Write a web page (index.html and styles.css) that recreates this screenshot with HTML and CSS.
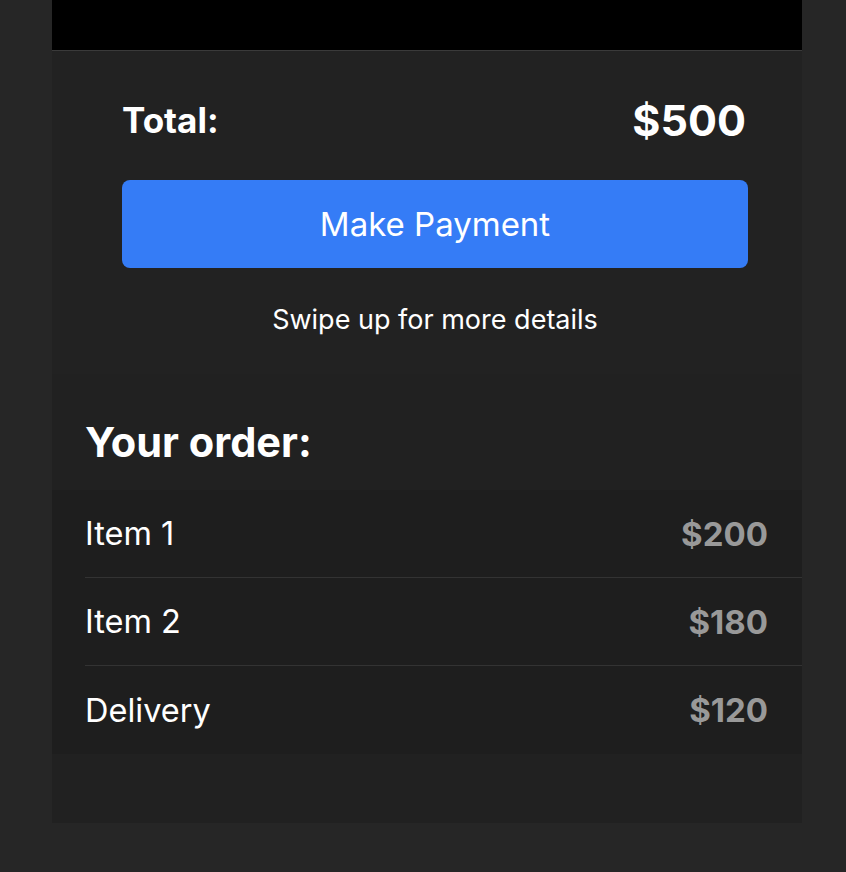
FILE: index.html
```
<!DOCTYPE html>
<html lang="en">
<head>
  <meta charset="UTF-8">
  <meta name="viewport" content="width=device-width, initial-scale=1.0">
  <title>Checkout</title>
  <link rel="stylesheet" href="styles.css">
</head>
<body>
  <div class="sheet">
    <div class="top-bar"></div>

    <section class="summary">
      <div class="total-row">
        <span class="total-label">Total:</span>
        <span class="total-amount">$500</span>
      </div>
      <button class="pay-button">Make Payment</button>
      <p class="swipe-hint">Swipe up for more details</p>
    </section>

    <section class="order">
      <h2 class="order-title">Your order:</h2>
      <ul class="order-list">
        <li class="order-item"><span>Item 1</span><span class="price">$200</span></li>
        <li class="order-item"><span>Item 2</span><span class="price">$180</span></li>
        <li class="order-item"><span>Delivery</span><span class="price">$120</span></li>
      </ul>
    </section>
  </div>
</body>
</html>
```

FILE: styles.css
```
body {
  font-family: Inter, "Noto Sans", sans-serif;
  margin: 0;
  padding: 0;
  background-color: #262626;
  color: #fff;
}
.sheet {
  width: 750px;
  height: 823px;
  margin-left: 52px;
  background-color: #212121;
  display: flex;
  flex-direction: column;
}
.top-bar {
  height: 50px;
  background-color: #000;
  border-bottom: 1px solid #3a3a3a;
}
/* Total + payment */
.summary {
  padding: 0 54px 0 70px;
  background-color: #222;
}
.total-row {
  display: flex;
  justify-content: space-between;
  align-items: center;
  height: 118px;
  padding-top: 10px;
  padding-right: 2px;
}
.total-label {
  font-size: 35px;
  font-weight: 700;
}
.total-amount {
  font-size: 43px;
  font-weight: 700;
}
.pay-button {
  display: block;
  width: 100%;
  height: 88px;
  margin-top: 1px;
  background-color: #357cf6;
  color: #fff;
  border: none;
  border-radius: 8px;
  font-family: inherit;
  font-size: 33px;
  font-weight: 400;
}
.swipe-hint {
  margin: 0;
  padding: 35px 0 0;
  height: 71px;
  text-align: center;
  font-size: 27px;
}
/* Order list */
.order {
  padding-left: 33px;
  padding-top: 38px;
  flex: 1;
}
.order-title {
  margin: 0;
  height: 78px;
  font-size: 41.5px;
  font-weight: 700;
  line-height: 60px;
}
.order-list {
  list-style: none;
  margin: 0 0 0 -33px;
  padding: 0 0 0 33px;
  background-color: #1e1e1e;
}
.order-item {
  display: flex;
  justify-content: space-between;
  align-items: center;
  height: 87px;
  padding-right: 34px;
  font-size: 32.5px;
  border-bottom: 1px solid #333;
}
.order-item:last-child {
  border-bottom: none;
  height: 88px;
}
.price {
  color: #999;
  font-weight: 700;
  font-size: 33px;
}
```
